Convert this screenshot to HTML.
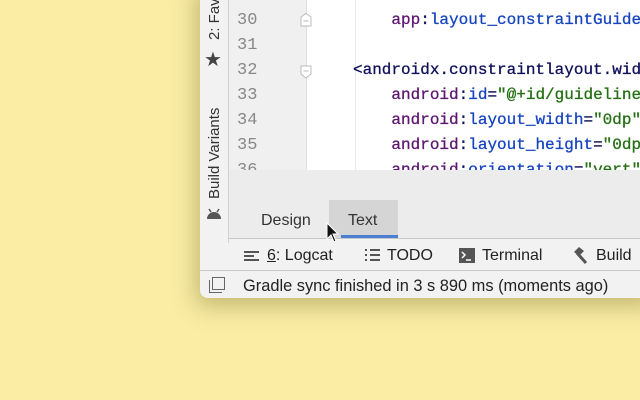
<!DOCTYPE html>
<html><head><style>
body{margin:0;width:640px;height:400px;background:#fbeda3;overflow:hidden;position:relative;font-family:"Liberation Sans",sans-serif}
.win{position:absolute;left:200px;top:-20px;width:460px;height:318px;background:#f2f2f2;border-bottom-left-radius:8px;box-shadow:-4px 8px 24px rgba(90,80,20,.35);overflow:hidden}
.strip{position:absolute;left:0;top:0;width:28px;height:263px;background:#f2f2f2;border-right:1px solid #d0d0d0}
.gut{position:absolute;left:29px;top:0;width:77px;height:190px;background:#f0f0f0;border-right:1px solid #ddd}
.ed{position:absolute;left:107px;top:0;width:360px;height:190px;background:#fff}
.code{position:absolute;font-family:"Liberation Mono",monospace;font-size:16px;white-space:pre;line-height:25px}
.ln{color:#888;left:37px;top:28px;font-size:17px}
.tx{left:153px;top:28px;color:#10105a;-webkit-text-stroke:0.3px}
.p{color:#5e1670}.b{color:#1745c0}.g{color:#257015}
.vt{position:absolute;transform:rotate(-90deg);transform-origin:left top;font-size:15px;color:#333;white-space:nowrap}
.tabs{position:absolute;left:29px;top:190px;width:440px;height:68px;background:#ececec;border-bottom:1px solid #c8c8c8}
.tool{position:absolute;left:0;top:260px;width:460px;height:30px;border-bottom:1px solid #c8c8c8;font-size:16px;color:#222}
.status{position:absolute;left:0;top:291px;width:460px;height:27px;font-size:16.4px;color:#222}
</style></head><body>
<div class="win">
<div class="strip"></div>
<div class="vt" style="left:6px;top:60px">2: Fav</div>
<div style="position:absolute;left:4px;top:67px;font-size:20px;color:#444">★</div>
<div class="vt" style="left:6px;top:219px">Build Variants</div>
<svg style="position:absolute;left:6px;top:226px" width="16" height="14"><path d="M1 13 A7 7 0 0 1 15 13 Z" fill="#555"/><path d="M3 3 L5 6 M13 3 L11 6" stroke="#555" stroke-width="1.5"/></svg>
<div class="gut"></div>
<div class="ed"></div>
<div style="position:absolute;left:155px;top:0;width:1px;height:190px;background:#e8e8e8"></div>
<div class="code ln">30
31
32
33
34
35
36</div>
<svg style="position:absolute;left:100px;top:33px" width="12" height="14"><path d="M1 4L6 0.5L11 4V13H1Z" fill="#fff" stroke="#bbb"/><path d="M3.5 8H8.5" stroke="#bbb"/></svg>
<svg style="position:absolute;left:100px;top:85px" width="12" height="14"><path d="M1 1H11V9L6 13L1 9Z" fill="#fff" stroke="#bbb"/><path d="M3.5 6H8.5" stroke="#bbb"/></svg>
<div class="code tx">    <span class="p">app</span>:<span class="b">layout_constraintGuide</span>

<span>&lt;androidx.constraintlayout.widget</span>
    <span class="p">android</span>:<span class="b">id</span>=<span class="g">"@+id/guideline"</span>
    <span class="p">android</span>:<span class="b">layout_width</span>=<span class="g">"0dp"</span>
    <span class="p">android</span>:<span class="b">layout_height</span>=<span class="g">"0dp"</span>
    <span class="p">android</span>:<span class="b">orientation</span>=<span class="g">"vert"</span></div>
<div class="tabs">
<div style="position:absolute;left:100px;top:30px;width:69px;height:38px;background:#d5d5d5"></div>
<div style="position:absolute;left:112px;top:65px;width:57px;height:3px;background:#4a7fd4"></div>
<div style="position:absolute;left:32px;top:42px;font-size:16px;color:#333">Design</div>
<div style="position:absolute;left:119px;top:42px;font-size:16px;color:#333">Text</div>
</div>
<div class="tool">
<svg style="position:absolute;left:44px;top:11px" width="16" height="12"><path d="M0 1H15M0 5H10M0 9H15" stroke="#555" stroke-width="2"/></svg>
<span style="position:absolute;left:67px;top:7px"><u>6</u>: Logcat</span>
<svg style="position:absolute;left:165px;top:9px" width="16" height="14"><path d="M0 1H2M5 1H15M0 6H2M5 6H15M0 11H2M5 11H15" stroke="#555" stroke-width="2"/></svg>
<span style="position:absolute;left:187px;top:7px">TODO</span>
<svg style="position:absolute;left:259px;top:8px" width="16" height="15"><rect width="16" height="15" fill="#555"/><path d="M3 4L6 7L3 10M7 12H12" stroke="#fff" stroke-width="1.5" fill="none"/></svg>
<span style="position:absolute;left:282px;top:7px">Terminal</span>
<svg style="position:absolute;left:373px;top:7px" width="18" height="18"><path d="M4 6L13 16" stroke="#555" stroke-width="3"/><path d="M1 5L6 0L11 4L6 9Z" fill="#555"/></svg>
<span style="position:absolute;left:396px;top:7px">Build</span>
</div>
<div class="status">
<svg style="position:absolute;left:8px;top:6px" width="18" height="18"><rect x="4.5" y="0.5" width="12" height="12" fill="none" stroke="#666"/><path d="M1.5 3V15.5H14" fill="none" stroke="#666"/></svg>
<span style="position:absolute;left:43px;top:6px">Gradle sync finished in 3 s 890 ms (moments ago)</span>
</div>
</div>
<svg style="position:absolute;left:326px;top:222px" width="14" height="22"><path d="M1 1L1 17L5 13L8 20L10 19L7 12L12 12Z" fill="#111" stroke="#fff" stroke-width="1"/></svg>
</body></html>
